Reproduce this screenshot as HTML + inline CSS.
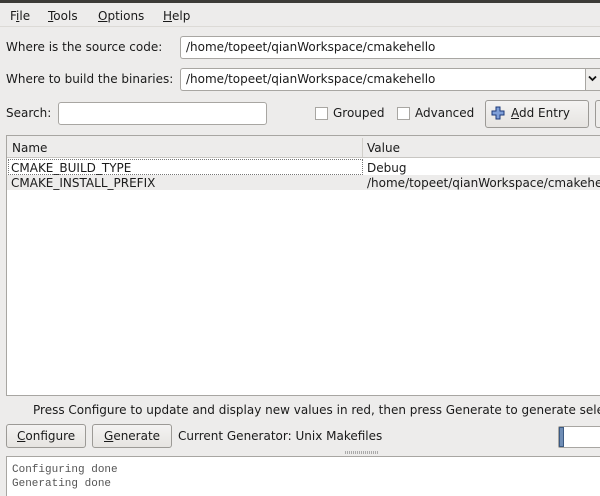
<!DOCTYPE html>
<html><head><meta charset="utf-8"><style>
*{margin:0;padding:0;box-sizing:border-box}
html,body{width:600px;height:496px;overflow:hidden}
body{background:#edeceb;font-family:"DejaVu Sans","Liberation Sans",sans-serif;font-size:12px;color:#1a1a1a;position:relative}
.a{position:absolute;white-space:nowrap}
.in{position:absolute;background:#fff;border:1px solid #a8a6a2;border-radius:3px 0 0 3px;border-right:none}
.btn{position:absolute;border:1px solid #9c9a96;border-radius:3px;background:linear-gradient(#f4f3f2,#e6e4e1);text-align:center}
.cb{position:absolute;width:13px;height:13px;background:#fff;border:1px solid #a8a6a2}
u{text-decoration:underline}
.clip{position:absolute;overflow:hidden;white-space:nowrap}
</style></head><body>
<div class="a" style="left:0;top:0;width:600px;height:3px;background:#3c3b37"></div>
<div class="a" style="left:10px;top:9px">F<u>i</u>le</div>
<div class="a" style="left:48px;top:9px"><u>T</u>ools</div>
<div class="a" style="left:98px;top:9px"><u>O</u>ptions</div>
<div class="a" style="left:163px;top:9px"><u>H</u>elp</div>
<div class="a" style="left:0;top:26px;width:600px;height:1px;background:#dcdad6"></div>

<div class="a" style="left:6px;top:40px">Where is the source code:</div>
<div class="in" style="left:180px;top:36px;width:420px;height:23px"></div>
<div class="a" style="left:186px;top:40px">/home/topeet/qianWorkspace/cmakehello</div>

<div class="a" style="left:6px;top:72px">Where to build the binaries:</div>
<div class="in" style="left:180px;top:68px;width:420px;height:23px"></div>
<div class="a" style="left:186px;top:72px">/home/topeet/qianWorkspace/cmakehello</div>
<div class="a" style="left:585px;top:69px;width:1px;height:21px;background:#a8a6a2"></div>
<div class="a" style="left:586px;top:69px;width:14px;height:21px;background:#eeedeb"></div>
<svg class="a" style="left:588px;top:75px" width="9" height="7" viewBox="0 0 9 7"><path d="M1 1.5l3.5 3.5 3.5-3.5" fill="none" stroke="#111" stroke-width="1.8"/></svg>

<div class="a" style="left:6px;top:106px">Search:</div>
<div class="in" style="left:58px;top:102px;width:209px;height:23px;border-right:1px solid #a8a6a2;border-radius:3px"></div>
<div class="cb" style="left:315px;top:107px"></div>
<div class="a" style="left:333px;top:106px">Grouped</div>
<div class="cb" style="left:397px;top:107px"></div>
<div class="a" style="left:415px;top:106px">Advanced</div>
<div class="btn" style="left:485px;top:100px;width:104px;height:28px"></div>
<svg class="a" style="left:491px;top:106px" width="14" height="14" viewBox="0 0 14 14"><path d="M5 1h4v4h4v4H9v4H5V9H1V5h4z" fill="#7f9fd8" stroke="#1c3a7a" stroke-width="1"/></svg>
<div class="a" style="left:511px;top:106px"><u>A</u>dd Entry</div>
<div class="a" style="left:595px;top:100px;width:5px;height:28px;border:1px solid #9c9a96;border-right:none;border-radius:3px 0 0 3px;background:#eeedeb"></div>

<div class="a" style="left:6px;top:135px;width:594px;height:261px;border:1px solid #a8a6a2;border-right:none;background:#fff"></div>
<div class="a" style="left:7px;top:136px;width:593px;height:22px;background:#edeceb;border-bottom:1px solid #c8c6c2"></div>
<div class="a" style="left:362px;top:138px;width:1px;height:19px;background:#d0cec9"></div>
<div class="a" style="left:12px;top:141px">Name</div>
<div class="a" style="left:367px;top:141px">Value</div>
<div class="a" style="left:8px;top:159px;width:355px;height:16px;border:1px dotted #777"></div>
<div class="a" style="left:7px;top:175px;width:593px;height:15px;background:#edeceb"></div>
<div class="a" style="left:11px;top:161px">CMAKE_BUILD_TYPE</div>
<div class="a" style="left:367px;top:161px">Debug</div>
<div class="a" style="left:11px;top:176px">CMAKE_INSTALL_PREFIX</div>
<div class="clip" style="left:367px;top:176px;width:233px">/home/topeet/qianWorkspace/cmakehello</div>

<div class="clip" style="left:33px;top:403px;width:567px">Press Configure to update and display new values in red, then press Generate to generate selected build files.</div>
<div class="btn" style="left:6px;top:424px;width:80px;height:24px"></div>
<div class="a" style="left:17px;top:429px"><u>C</u>onfigure</div>
<div class="btn" style="left:92px;top:424px;width:80px;height:24px"></div>
<div class="a" style="left:104px;top:429px"><u>G</u>enerate</div>
<div class="a" style="left:178px;top:429px">Current Generator: Unix Makefiles</div>
<div class="a" style="left:558px;top:426px;width:42px;height:22px;background:#fff;border:1px solid #a8a6a2;border-right:none;border-radius:2px 0 0 2px"></div>
<div class="a" style="left:559px;top:427px;width:5px;height:20px;background:#6f8db5;border:1px solid #3c5a82"></div>
<div class="a" style="left:345px;top:451px;width:34px;height:3px;background:repeating-linear-gradient(90deg,#aaa 0 1px,transparent 1px 2px)"></div>
<div class="a" style="left:6px;top:456px;width:594px;height:40px;background:#fff;border:1px solid #a8a6a2;border-right:none;border-bottom:none"></div>
<div class="a" style="left:12px;top:464px;font-family:'Liberation Mono',monospace;font-size:11px;color:#555">Configuring done</div>
<div class="a" style="left:12px;top:478px;font-family:'Liberation Mono',monospace;font-size:11px;color:#555">Generating done</div>
</body></html>
